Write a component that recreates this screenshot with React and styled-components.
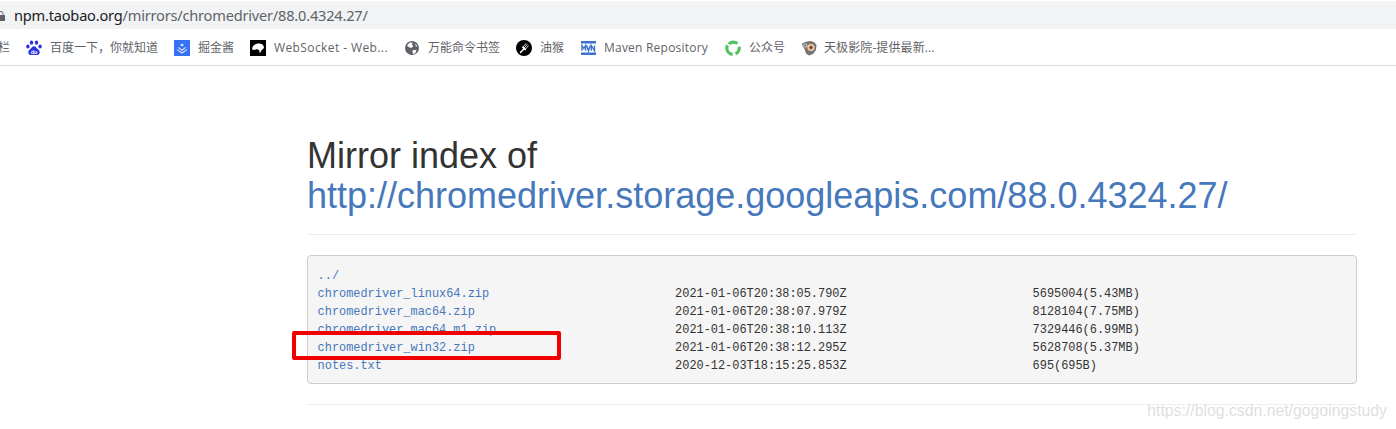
import React from "react";
import styled, { createGlobalStyle } from "styled-components";

const Global = createGlobalStyle`
  html, body { margin: 0; padding: 0; background: #fff; overflow: hidden; }
  #root { width: 1396px; height: 429px; overflow: hidden; }
`;
const Page = styled.div`position: relative; width: 1396px; height: 429px; overflow: hidden; background: #fff; font-family: "Liberation Sans", Arial, sans-serif;`;
const AddressBar = styled.div`
  height: 28px; margin-top: 1px; background: #f1f3f4; display: flex; align-items: center; gap: 7px;
  padding-left: 0; font-size: 14.6px; font-family: "Noto Sans", "Liberation Sans", sans-serif; color: #202124; overflow: hidden;
`;
const LockIcon = styled.svg`width: 7px; height: 10px; margin-top: 2px; flex: none;`;
const UrlMuted = styled.span`color: #5f6368;`;
const Url = styled.div`white-space: nowrap; line-height: 28px; letter-spacing: -0.21px;`;
const Bookmarks = styled.div`
  height: 37px; padding-top: 2px; display: flex; align-items: center; border-bottom: 1px solid #dadce0; overflow: hidden;
  margin-left: -2px; box-sizing: border-box;
`;
const Bookmark = styled.div`
  flex: none; width: ${p => p.$w}px; display: flex; align-items: center; gap: ${p => p.$gap ?? 8}px;
  font-size: 12px; line-height: 16px; color: #5f6368; white-space: nowrap;
  letter-spacing: ${p => p.$track ?? 0}px;
  font-family: "Open Sans", "Noto Sans CJK SC", sans-serif;
  svg { flex: none; }
`;
const Main = styled.main`padding-left: 307px; width: 1050px; box-sizing: content-box;`;
const Heading = styled.h1`
  margin: 70px 0 0; font-size: 36px; line-height: 39.6px; font-weight: 400; color: #333;
  font-family: "Liberation Sans", Arial, sans-serif; white-space: nowrap;
`;
const HeadLink = styled.a`color: #4678bb; text-decoration: none;`;
const Rule = styled.hr`margin: ${p => p.$top}px 0 ${p => p.$bottom}px; border: 0; border-top: 1px solid #eeeeee; height: 0;`;
const Listing = styled.div`
  box-sizing: border-box; height: 129px; padding: 11px 10px 10px; background: #f5f5f5; border: 1px solid #ccc; border-radius: 4px;
  font-family: "Liberation Mono", monospace; font-size: 11.92px; line-height: 18px; color: #333;
`;
const Row = styled.div`display: grid; grid-template-columns: 357.5px 357.5px 1fr; height: 18px; white-space: pre; margin-left: -0.4px;`;
const FileLink = styled.a`color: #4678bb; text-decoration: none;`;
const Highlight = styled.div`
  position: absolute; left: 292px; top: 331px; width: 269px; height: 29px; box-sizing: border-box;
  border: 4px solid #f00000; border-radius: 2px;
`;
const Watermark = styled.div`
  position: absolute; right: 9px; top: 402px; font-size: 15.8px; color: rgba(190,190,190,.5); white-space: nowrap;
  font-family: "Liberation Sans", Arial, sans-serif;
`;

const Paw = () => (
  <svg width="16" height="16" viewBox="0 0 16 16"><g fill="#2932e1">
    <ellipse cx="5.5" cy="2.6" rx="1.7" ry="2.2"/><ellipse cx="10.5" cy="2.6" rx="1.7" ry="2.2"/>
    <ellipse cx="1.9" cy="6.5" rx="1.7" ry="2.1"/><ellipse cx="14.1" cy="6.5" rx="1.7" ry="2.1"/>
    <path d="M8 6.200c-2 0-2.600 2-4.200 3.200C2.200 10.600 2 12 2.600 13.400c.8 1.900 3 1.600 5.400 1.300 2.400.3 4.600.6 5.400-1.300.6-1.400.4-2.800-1.200-4C10.600 8.200 10 6.200 8 6.200z"/></g>
    <text x="8" y="13.600" fontSize="5.500" fontFamily="Liberation Sans" fontWeight="700" textAnchor="middle" fill="#fff">du</text>
  </svg>
);
const Juejin = () => (
  <svg width="16" height="16" viewBox="0 0 16 16"><rect width="16" height="16" fill="#3570f5"/>
    <path d="M8 3.500l2 1.500-2 1.500L6 5z" fill="#dbe6ff"/>
    <path d="M4.300 7.400L8 10.200l3.700-2.800M3 9.600L8 13l5-3.400" fill="none" stroke="#dbe6ff" strokeWidth="1.100"/></svg>
);
const Ws = () => (
  <svg width="16" height="16" viewBox="0 0 16 16"><rect width="16" height="16" fill="#000"/>
    <path d="M2 9C2.500 5.500 5.500 3.500 9 3.600c2.700.1 4.700 1.600 5 3.800-.3 1.300-1.500 2-2.400 2.700-.5 1.100-.8 2.300-1.700 2.900-.6-1-.3-2.300-1-3-1-.6-2.200-.8-3.200-.5C4.700 10 3.300 10.300 2 9z" fill="#fff"/></svg>
);
const Globe = () => (
  <svg width="16" height="16" viewBox="0 0 16 16"><circle cx="8" cy="8" r="7" fill="#5f6368"/>
    <path d="M3 5.500l2.800-3 2.800.3-.8 1.800L9.300 6 7.300 8 5 7.300zM9 10h3.500l-1.200 3.300-2 .7-1-2.500zM11 3.500l2.500 2.500-1.500.5z" fill="#fff"/></svg>
);
const Fork = () => (
  <svg width="16" height="16" viewBox="0 0 16 16"><circle cx="8" cy="8" r="8" fill="#000"/>
    <path d="M4.500 12.500l3.800-4" stroke="#fff" strokeWidth="1.500" strokeLinecap="round"/>
    <path d="M6.900 7.300l2.300 2.100" stroke="#fff" strokeWidth="1.700" strokeLinecap="round"/>
    <path d="M6.900 7l3-3.400M8.100 8l3.100-3.400M9.300 9.200l3-3.300" fill="none" stroke="#fff" strokeWidth=".9" strokeLinecap="round"/></svg>
);
const Mvn = () => (
  <svg width="15" height="14" viewBox="0 0 15 14"><rect width="15" height="2.500" fill="#3f73c9"/><rect y="11.500" width="15" height="2.500" fill="#3f73c9"/>
    <path d="M1 9.800V4.500l1.800 3 1.800-3v5.300M5.700 4.500l1.800 5.300 1.800-5.300M10.300 9.800V4.500l3.200 5.300V4.500" fill="none" stroke="#3f73c9" strokeWidth="1.400"/></svg>
);
const Green = () => (
  <svg width="16" height="16" viewBox="0 0 16 16" fill="none" stroke="#4fc35f" strokeWidth="3.200">
    <path d="M3.800 4A6.200 6.200 0 0 1 12.400 3.600"/><path d="M14.200 6.800a6.200 6.200 0 0 1-3.700 6.900"/><path d="M7.600 14.300A6.200 6.200 0 0 1 1.800 8.300a6.200 6.200 0 0 1 .7-3"/></svg>
);
const Owl = () => (
  <svg width="16" height="16" viewBox="0 0 16 16"><path d="M1 3.500l4-1.800 4-.7 4 1 2.500 3-.5 5-3 4-4 1.500-3-2-1.500-4.500-2-3z" fill="#77736e"/>
    <circle cx="10" cy="7.500" r="3.600" fill="#e8d8c6"/><circle cx="10" cy="7.500" r="2.200" fill="#d9782e"/><circle cx="10" cy="7.500" r="1" fill="#333"/>
    <circle cx="4.300" cy="5.500" r="2" fill="#d8d5d0"/><circle cx="4.300" cy="5.500" r=".9" fill="#444"/></svg>
);

const marks = [
  { w: 28, label: "栏", gap: 0 },
  { w: 148, icon: <Paw />, label: "百度一下，你就知道" },
  { w: 76, icon: <Juejin />, label: "掘金酱" },
  { w: 154, icon: <Ws />, label: "WebSocket - Web...", track: 0.4 },
  { w: 112, icon: <Globe />, label: "万能命令书签" },
  { w: 65, icon: <Fork />, label: "油猴" },
  { w: 144, icon: <Mvn />, label: "Maven Repository", gap: 8, track: 0.22 },
  { w: 76, icon: <Green />, label: "公众号" },
  { w: 150, icon: <Owl />, label: "天极影院-提供最新...", gap: 7, track: 0.1 },
];

const files = [
  ["chromedriver_linux64.zip", "2021-01-06T20:38:05.790Z", "5695004(5.43MB)"],
  ["chromedriver_mac64.zip", "2021-01-06T20:38:07.979Z", "8128104(7.75MB)"],
  ["chromedriver_mac64_m1.zip", "2021-01-06T20:38:10.113Z", "7329446(6.99MB)"],
  ["chromedriver_win32.zip", "2021-01-06T20:38:12.295Z", "5628708(5.37MB)"],
  ["notes.txt", "2020-12-03T18:15:25.853Z", "695(695B)"],
];

export default function App() {
  return (
    <Page>
      <Global />
      <AddressBar>
        <LockIcon viewBox="0 0 7 10"><path d="M-3 4h8v6h-8z" fill="#5f6368" /><path d="M-1 4V2.500a2 2 0 0 1 4 0V4" fill="none" stroke="#5f6368" /></LockIcon>
        <Url>npm.taobao.org<UrlMuted>/mirrors/chromedriver/88.0.4324.27/</UrlMuted></Url>
      </AddressBar>
      <Bookmarks>
        {marks.map(m => (
          <Bookmark key={m.label} $w={m.w} $gap={m.gap} $track={m.track}>{m.icon}<span>{m.label}</span></Bookmark>
        ))}
      </Bookmarks>
      <Main>
        <Heading>Mirror index of<br /><HeadLink href="#">http://chromedriver.storage.googleapis.com/88.0.4324.27/</HeadLink></Heading>
        <Rule $top={19} $bottom={20} />
        <Listing>
          <Row><FileLink href="#">../</FileLink></Row>
          {files.map(f => (
            <Row key={f[0]}><FileLink href="#">{f[0]}</FileLink><span>{f[1]}</span><span>{f[2]}</span></Row>
          ))}
        </Listing>
        <Rule $top={20} $bottom={0} />
      </Main>
      <Highlight />
      <Watermark>https://blog.csdn.net/gogoingstudy</Watermark>
    </Page>
  );
}
